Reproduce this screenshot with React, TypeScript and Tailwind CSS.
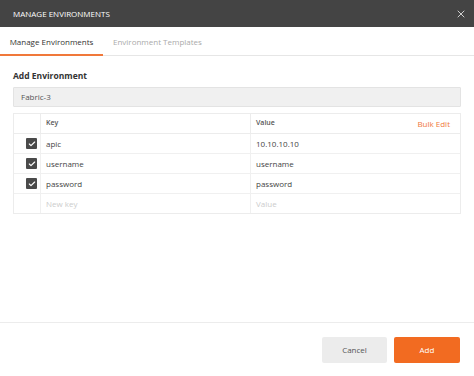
import { Check, X } from 'lucide-react';

const rows = [
  { key: 'apic', value: '10.10.10.10' },
  { key: 'username', value: 'username' },
  { key: 'password', value: 'password' },
];

function Checkbox() {
  return (
    <div className="w-[11px] h-[11px] rounded-[1px] bg-[#4a4a4a] flex items-center justify-center">
      <Check className="w-[8px] h-[8px] text-white" strokeWidth={3.5} />
    </div>
  );
}

export default function App() {
  return (
    <div
      className="w-[474px] h-[376px] bg-white flex flex-col text-[#333]"
      style={{ fontFamily: '"Open Sans", "Noto Sans", sans-serif' }}
    >
      {/* header */}
      <div className="h-[27px] bg-[#444444] flex items-center justify-between pl-[13px] pr-[7px] shrink-0">
        <span className="text-white text-[8px]">MANAGE ENVIRONMENTS</span>
        <X className="w-[12px] h-[12px] text-[#d0d0d0]" strokeWidth={2} />
      </div>

      {/* tabs */}
      <div className="h-[29px] flex items-stretch border-b border-[#e6e6e6] shrink-0">
        <div className="w-[103px] flex items-center justify-center pt-[2px] border-b-2 border-[#f0783a] text-[8px] text-[#333] -mb-px">
          Manage Environments
        </div>
        <div className="pl-[10px] pt-[2px] flex items-center text-[8px] text-[#aaa]">Environment Templates</div>
      </div>

      {/* body */}
      <div className="flex-1 px-[13px] pt-[13px]">
        <div className="text-[8.5px] font-bold text-[#333] leading-[13px]">Add Environment</div>
        <div className="mt-[5px] h-[20px] bg-[#f0f0f0] border border-[#e3e3e3] rounded-[1px] flex items-center px-[7px] text-[8px] text-[#555]">
          Fabric-3
        </div>

        <div className="mt-[6px] border border-[#ececec] text-[8px]">
          <div className="h-[20px] flex items-stretch border-b border-[#ececec]">
            <div className="w-[27px] border-r border-[#ececec]" />
            <div className="w-[210px] border-r border-[#ececec] flex items-center px-[5px] text-[7px] font-semibold text-[#555]">
              Key
            </div>
            <div className="flex-1 flex items-center justify-between px-[5px] pr-[10px]">
              <span className="text-[7px] font-semibold text-[#555]">Value</span>
              <span className="text-[8px] text-[#f0783a]">Bulk Edit</span>
            </div>
          </div>
          {rows.map((r) => (
            <div key={r.key} className="h-[20px] flex items-stretch border-b border-[#f0f0f0]">
              <div className="w-[27px] border-r border-[#f0f0f0] flex items-center justify-end pr-[3px]">
                <Checkbox />
              </div>
              <div className="w-[210px] border-r border-[#f0f0f0] flex items-center px-[5px] text-[#444]">{r.key}</div>
              <div className="flex-1 flex items-center px-[5px] text-[#444]">{r.value}</div>
            </div>
          ))}
          <div className="h-[19px] flex items-stretch">
            <div className="w-[27px] border-r border-[#f0f0f0]" />
            <div className="w-[210px] border-r border-[#f0f0f0] flex items-center px-[5px] text-[#ccc]">New key</div>
            <div className="flex-1 flex items-center px-[5px] text-[#ccc]">Value</div>
          </div>
        </div>
      </div>

      {/* footer */}
      <div className="h-[54px] border-t border-[#ececec] flex items-center justify-end gap-[7px] px-[14px] shrink-0">
        <button className="w-[65px] h-[26px] rounded-[2px] bg-[#ececec] text-[8px] text-[#555]">Cancel</button>
        <button className="w-[66px] h-[26px] rounded-[2px] bg-[#f26b21] text-[8px] text-white">Add</button>
      </div>
    </div>
  );
}
